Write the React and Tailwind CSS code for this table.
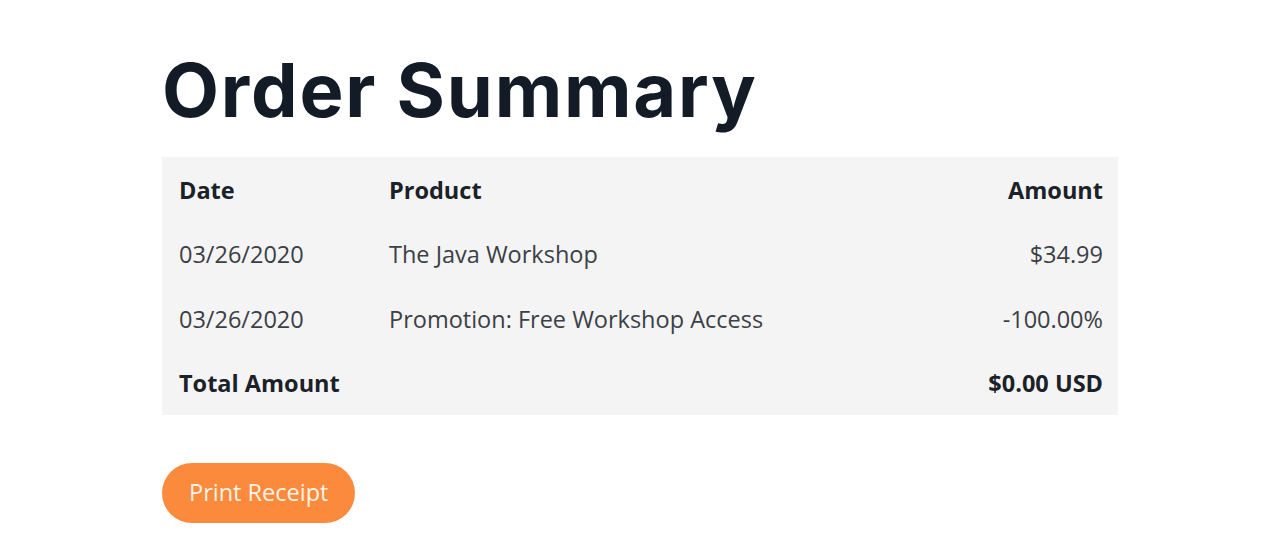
export default function App() {
  const body = { fontFamily: '"Open Sans", "Noto Sans", sans-serif' };
  return (
    <div className="bg-white w-[1280px] h-[551px]" style={body}>
      <div className="pl-[162px] pt-[50px] w-[1118px]">
        <h1
          className="text-[74px] leading-[80px] font-bold text-[#121b26] tracking-[1.8px]"
          style={{ fontFamily: 'Inter, "Noto Sans", sans-serif' }}
        >
          Order Summary
        </h1>
        <div className="mt-[27px] bg-[#f4f4f4] pl-[17px] pr-[15px] pt-[2px] text-[23.5px] text-[#3b4046]">
          <div className="grid grid-cols-[210px_1fr_auto] h-[64px] items-center font-bold text-[#1b2129]">
            <div>Date</div>
            <div>Product</div>
            <div className="text-right">Amount</div>
          </div>
          <div className="grid grid-cols-[210px_1fr_auto] h-[64px] items-center">
            <div>03/26/2020</div>
            <div>The Java Workshop</div>
            <div className="text-right">$34.99</div>
          </div>
          <div className="grid grid-cols-[210px_1fr_auto] h-[66px] items-center">
            <div>03/26/2020</div>
            <div>Promotion: Free Workshop Access</div>
            <div className="text-right">-100.00%</div>
          </div>
          <div className="grid grid-cols-[210px_1fr_auto] h-[62px] items-center font-bold text-[#1b2129]">
            <div>Total Amount</div>
            <div></div>
            <div className="text-right">$0.00 USD</div>
          </div>
        </div>
        <button className="mt-[48px] h-[60px] px-[27px] rounded-full bg-[#fc8a3d] text-[#fff3e6] text-[23.5px]">
          Print Receipt
        </button>
      </div>
    </div>
  );
}
